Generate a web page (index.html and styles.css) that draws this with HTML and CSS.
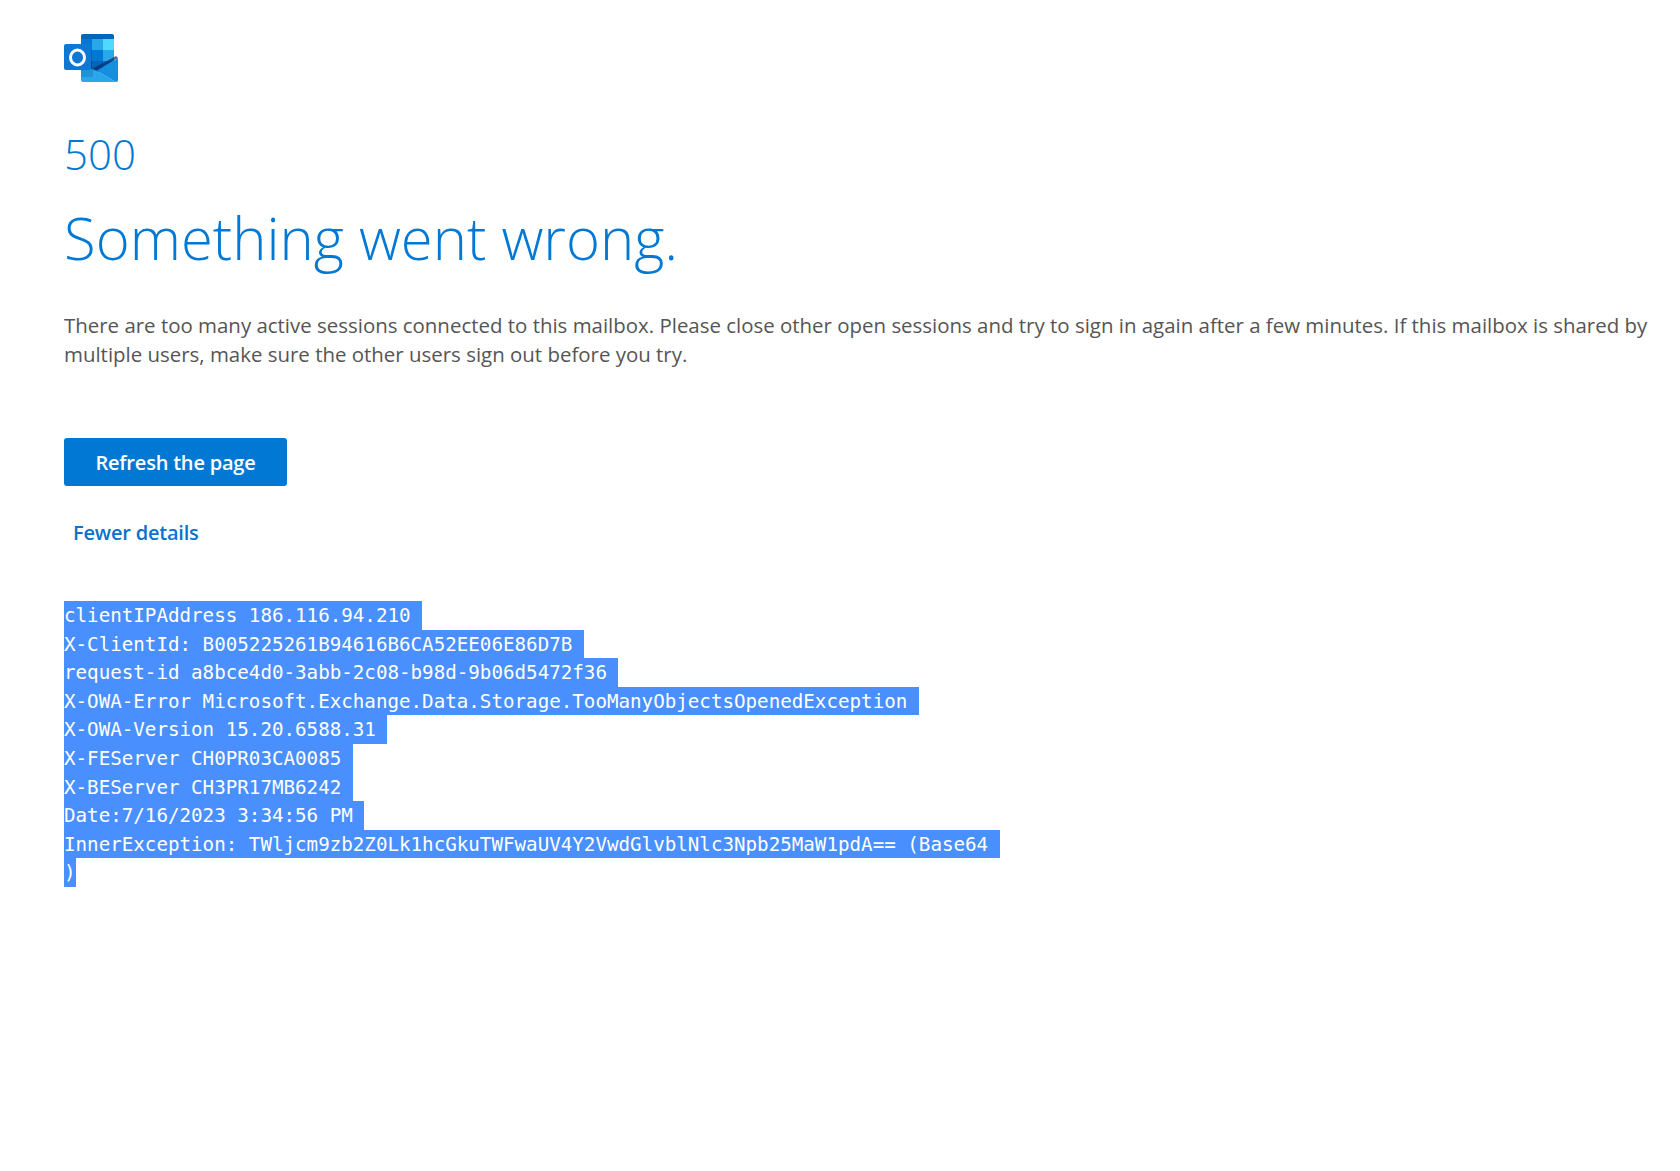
FILE: index.html
```html
<!DOCTYPE html>
<html lang="en">
<head>
<meta charset="utf-8">
<title>Something went wrong</title>
<link rel="stylesheet" href="styles.css">
</head>
<body>
<main class="page">
  <svg class="logo" viewBox="0 0 54 48" width="54" height="48" aria-label="Outlook">
    <path fill="#0364b8" d="M17 2a2 2 0 0 1 2-2H48a2 2 0 0 1 2 2V5H17z"/>
    <rect x="17" y="5" width="11" height="11" fill="#0078d4"/>
    <rect x="28" y="5" width="11" height="11" fill="#28a8ea"/>
    <rect x="39" y="5" width="11" height="11" fill="#50d9ff"/>
    <rect x="17" y="16" width="11" height="11" fill="#0364b8"/>
    <rect x="28" y="16" width="11" height="11" fill="#0078d4"/>
    <rect x="39" y="16" width="11" height="11" fill="#28a8ea"/>
    <rect x="17" y="27" width="11" height="11" fill="#064a8c"/>
    <rect x="28" y="27" width="11" height="11" fill="#0364b8"/>
    <rect x="39" y="27" width="11" height="11" fill="#0078d4"/>
    <path fill="#0a2767" opacity=".7" d="M54 24 52 22 29 34.500 32 36.500z"/>
    <path fill="#28a8ea" d="M17 32 33 37 52 48H19a2 2 0 0 1-2-2z"/>
    <path fill="#1490df" d="M33 37 54 24V46a2 2 0 0 1-2 2z"/>
    <path fill="#0a4f8f" opacity=".25" d="M17 36H29V43H17z"/>
    <rect x="0" y="10" width="27" height="26" rx="2" fill="#0f78d4"/>
    <ellipse cx="13.500" cy="23.500" rx="7" ry="7.400" fill="none" stroke="#fff" stroke-width="3"/>
  </svg>
  <p class="code">500</p>
  <h1 class="title">Something went wrong.</h1>
  <p class="message">There are too many active sessions connected to this mailbox. Please close other open sessions and try to sign in again after a few minutes. If this mailbox is shared by multiple users, make sure the other users sign out before you try.</p>
  <button class="refresh" type="button">Refresh the page</button>
  <a class="toggle" href="#">Fewer details</a>
  <div class="details">
    <div class="line">clientIPAddress 186.116.94.210</div>
    <div class="line">X-ClientId: B005225261B94616B6CA52EE06E86D7B</div>
    <div class="line">request-id a8bce4d0-3abb-2c08-b98d-9b06d5472f36</div>
    <div class="line">X-OWA-Error Microsoft.Exchange.Data.Storage.TooManyObjectsOpenedException</div>
    <div class="line">X-OWA-Version 15.20.6588.31</div>
    <div class="line">X-FEServer CH0PR03CA0085</div>
    <div class="line">X-BEServer CH3PR17MB6242</div>
    <div class="line">Date:7/16/2023 3:34:56 PM</div>
    <div class="line">InnerException: TWljcm9zb2Z0Lk1hcGkuTWFwaUV4Y2VwdGlvblNlc3Npb25MaW1pdA== (Base64</div>
    <div class="line last">)</div>
  </div>
</main>
</body>
</html>
```
FILE: styles.css
```css
html, body {
  margin: 0;
  background: #fff;
}
.page {
  padding: 34px 30px 0 64px;
  font-family: "Open Sans", "Liberation Sans", sans-serif;
  display: flex;
  flex-direction: column;
  align-items: flex-start;
}
.logo {
  display: block;
}
.code {
  margin: 42px 0 0;
  font-size: 42px;
  line-height: 60px;
  font-weight: 300;
  color: #0078d4;
}
.title {
  margin: 14px 0 0;
  font-size: 58px;
  line-height: 80px;
  font-weight: 300;
  color: #0078d4;
}
.message {
  margin: 33px 0 0;
  font-size: 20.45px;
  line-height: 29px;
  font-weight: 500;
  color: #555;
}
.refresh {
  margin-top: 69px;
  width: 223px;
  height: 48px;
  border: 0;
  border-radius: 3px;
  background: #0078d4;
  color: #fff;
  font: 600 20px "Open Sans", "Liberation Sans", sans-serif;
  letter-spacing: -0.2px;
  padding: 0;
}
.toggle {
  margin: 32px 0 0 9px;
  font-size: 20px;
  line-height: 30px;
  font-weight: 600;
  letter-spacing: -0.2px;
  color: #0b72cc;
  text-decoration: none;
}
.details {
  margin-top: 53px;
  font-family: "DejaVu Sans Mono", "Liberation Mono", monospace;
  font-size: 19.2px;
  color: #fff;
}
.line {
  width: fit-content;
  height: 28.6px;
  line-height: 30.6px;
  padding-right: 11.5px;
  background: #4a8ffe;
  white-space: pre;
}
.line.last {
  padding-right: 0;
}
```
